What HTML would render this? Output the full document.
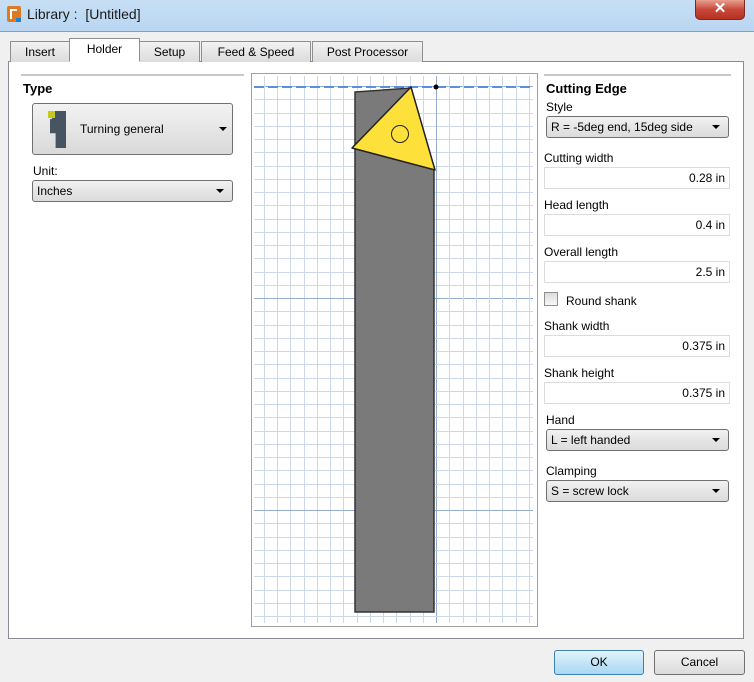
<!DOCTYPE html>
<html><head><meta charset="utf-8"><style>
*{box-sizing:border-box}
body{margin:0;width:754px;height:682px;background:#f0f0f0;font-family:"Liberation Sans",sans-serif;font-size:12px;color:#000;position:relative;overflow:hidden}
.abs{position:absolute}
.title{left:0;top:0;width:754px;height:31px;background:linear-gradient(#c7dff5,#b9d6f2);}
.tab{position:absolute;top:41px;height:21px;border:1px solid #8e8f8f;border-bottom:none;background:linear-gradient(#f2f2f2,#dcdcdc);text-align:center;line-height:20px;font-size:12px}
.panel{left:8px;top:61px;width:736px;height:578px;border:1px solid #898c95;background:#fff}
.combo{position:absolute;border:1px solid #707070;border-radius:3px;background:linear-gradient(#f2f2f2,#e5e5e5 50%,#dcdcdc);height:22px;line-height:20px;padding-left:4px;font-size:12px}
.combo:after{content:"";position:absolute;right:8px;top:8px;border-left:4px solid transparent;border-right:4px solid transparent;border-top:4px solid #000}
.inp{position:absolute;left:544px;width:186px;height:22px;border:1px solid #dcdcdc;background:#fff;text-align:right;padding-right:4px;line-height:20px;font-size:12px}
.lbl{position:absolute;font-size:12px}
.btn{position:absolute;top:650px;height:25px;border:1px solid #707070;border-radius:3px;background:linear-gradient(#f2f2f2,#dcdcdc);text-align:center;line-height:23px;font-size:12px}
</style></head><body>
<div class="abs title"></div>
<div class="abs" style="left:7px;top:6px;width:14px;height:16px;background:#e07a20;border-radius:2px"></div>
<div class="abs" style="left:10px;top:9px;width:7px;height:2px;background:#fff"></div>
<div class="abs" style="left:10px;top:9px;width:2px;height:10px;background:#fff"></div>
<div class="abs" style="left:16px;top:18px;width:5px;height:4px;background:#1e7fd8"></div>
<div class="abs" style="left:27px;top:6px;font-size:14px;color:#1a1a1a">Library :&nbsp; [Untitled]</div>
<div class="abs" style="left:695px;top:0;width:50px;height:20px;border:1px solid #7a2a20;border-top:none;border-radius:0 0 5px 5px;background:linear-gradient(#e8a090,#c8483a 50%,#b83020);color:#fff;text-align:center;font-weight:bold;font-size:15px;line-height:18px">✕</div>
<div class="abs" style="left:0;top:31px;width:754px;height:651px;background:#f0f0f0;border-top:1px solid #8a9fb5"></div>
<div class="abs panel"></div>
<div class="tab" style="left:10px;width:60px">Insert</div>
<div class="tab" style="left:69px;top:38px;height:24px;width:71px;background:#fff;border-bottom:1px solid #fff;z-index:2">Holder</div>
<div class="tab" style="left:139px;width:61px">Setup</div>
<div class="tab" style="left:201px;width:110px">Feed &amp; Speed</div>
<div class="tab" style="left:312px;width:111px">Post Processor</div>
<div class="abs" style="left:21px;top:74px;width:223px;height:2px;background:#c8c8c8"></div>
<div class="abs" style="left:23px;top:81px;font-weight:bold;font-size:13px">Type</div>
<div class="abs" style="left:32px;top:103px;width:201px;height:52px;border:1px solid #707070;border-radius:3px;background:linear-gradient(#f2f2f2,#e6e6e6 50%,#d9d9d9)"></div>
<div class="abs" style="left:50px;top:111px;width:16px;height:37px;background:#475563;clip-path:polygon(12% 0,100% 0,100% 100%,35% 100%,35% 60%,0 60%,0 22%,12% 22%)"></div>
<div class="abs" style="left:48px;top:111px;width:7px;height:7px;background:#c8c820"></div>
<div class="abs" style="left:80px;top:122px;font-size:12px">Turning general</div>
<div class="abs" style="left:219px;top:127px;border-left:4px solid transparent;border-right:4px solid transparent;border-top:4px solid #000"></div>
<div class="lbl" style="left:33px;top:164px">Unit:</div>
<div class="combo" style="left:32px;top:180px;width:201px">Inches</div>
<div class="abs" style="left:251px;top:73px;width:287px;height:554px;border:1px solid #a0a0a0;background:#fff"></div>
<svg class="abs" style="left:0;top:0" width="754" height="682">
<defs><clipPath id="c"><rect x="254" y="76" width="279" height="547"/></clipPath></defs>
<g id="grid" clip-path="url(#c)"></g>
</svg>
<script>
var g=document.getElementById('grid'),s='';
var st=13.25;
for(var i=-30;i<=30;i++){var x=Math.round(436+i*st)+0.5;var y=Math.round(298+i*st)+0.5;
var my=(i%16==0);
s+='<line x1="'+x+'" y1="76" x2="'+x+'" y2="623" stroke="'+(i==0?'#93acd0':'#cbd9ea')+'"/>';
s+='<line x1="254" y1="'+y+'" x2="533" y2="'+y+'" stroke="'+(my?'#93acd0':'#cbd9ea')+'"/>';}
s+='<line x1="254" y1="87" x2="533" y2="87" stroke="#5b8ce6" stroke-width="2" stroke-dasharray="10,4"/>';
s+='<polygon points="355,92 411,88 434,170 434,612 355,612" fill="#7a7a7a" stroke="#333" stroke-width="1.5"/>';
s+='<polygon points="411,87 352,148 435,170" fill="#fde03a" stroke="#222" stroke-width="1.5" stroke-linejoin="round"/>';
s+='<circle cx="400" cy="134" r="8.5" fill="none" stroke="#222" stroke-width="1"/>';
s+='<circle cx="436" cy="87" r="2.5" fill="#000"/>';
g.innerHTML=s;
</script>
<div class="abs" style="left:544px;top:74px;width:187px;height:2px;background:#c8c8c8"></div>
<div class="abs" style="left:546px;top:81px;font-weight:bold;font-size:13px">Cutting Edge</div>
<div class="lbl" style="left:546px;top:100px">Style</div>
<div class="combo" style="left:546px;top:116px;width:183px">R = -5deg end, 15deg side</div>
<div class="lbl" style="left:544px;top:151px">Cutting width</div>
<div class="inp" style="top:167px">0.28 in</div>
<div class="lbl" style="left:544px;top:198px">Head length</div>
<div class="inp" style="top:214px">0.4 in</div>
<div class="lbl" style="left:544px;top:245px">Overall length</div>
<div class="inp" style="top:261px">2.5 in</div>
<div class="abs" style="left:544px;top:292px;width:14px;height:14px;border:1px solid #8f8f8f;background:linear-gradient(#dcdcdc,#f8f8f8)"></div>
<div class="lbl" style="left:566px;top:294px">Round shank</div>
<div class="lbl" style="left:544px;top:319px">Shank width</div>
<div class="inp" style="top:335px">0.375 in</div>
<div class="lbl" style="left:544px;top:366px">Shank height</div>
<div class="inp" style="top:382px">0.375 in</div>
<div class="lbl" style="left:546px;top:413px">Hand</div>
<div class="combo" style="left:546px;top:429px;width:183px">L = left handed</div>
<div class="lbl" style="left:546px;top:464px">Clamping</div>
<div class="combo" style="left:546px;top:480px;width:183px">S = screw lock</div>
<div class="btn" style="left:554px;width:90px;border-color:#3c7fb1;background:linear-gradient(#e5f4fc,#c4e5f6 50%,#a8d8f2)">OK</div>
<div class="btn" style="left:654px;width:91px">Cancel</div>
</body></html>
